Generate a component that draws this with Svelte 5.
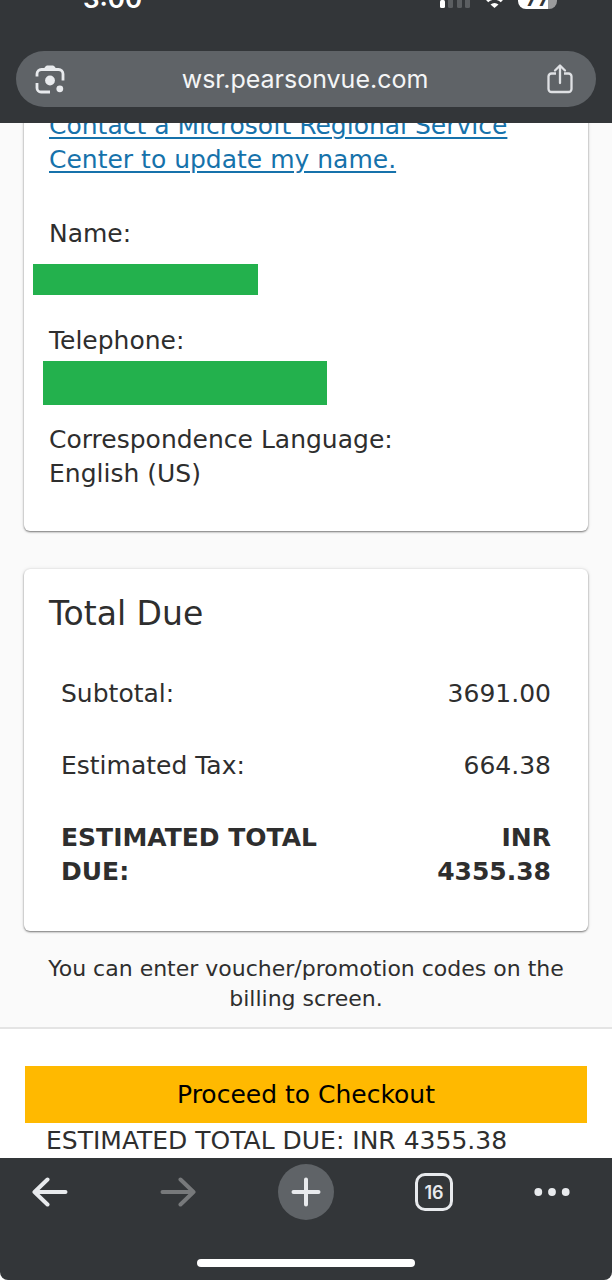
<script>
  const charges = [
    { label: 'Subtotal:', amount: '3691.00' },
    { label: 'Estimated Tax:', amount: '664.38' }
  ];
  const total = { label: 'ESTIMATED TOTAL DUE:', amount: 'INR 4355.38' };
  const openTabs = 16;
</script>

<div class="screen">
  <header>
    <div class="status">
      <span class="time">3:00</span>
      <div class="indicators">
        <svg width="32" height="24" viewBox="0 0 32 24" aria-hidden="true">
          <rect x="0" y="16" width="5" height="8" rx="1.5" fill="#fff" />
          <rect x="8" y="11" width="5" height="13" rx="1.5" fill="#5b5e61" />
          <rect x="17" y="6" width="5" height="18" rx="1.5" fill="#5b5e61" />
          <rect x="25" y="1" width="5" height="23" rx="1.5" fill="#5b5e61" />
        </svg>
        <svg width="30" height="24" viewBox="0 0 30 24" aria-hidden="true">
          <path d="M2 10.500a18.500 18.500 0 0 1 26 0M7 17a11 11 0 0 1 15 0" fill="none" stroke="#fff" stroke-width="3.500" />
          <path d="M10.500 20.500a6 6 0 0 1 8 0L14.500 24Z" fill="#fff" />
        </svg>
        <span class="battery">77</span>
      </div>
    </div>
    <div class="address">
      <button aria-label="Search with camera">
        <svg width="32" height="32" viewBox="0 0 32 32" aria-hidden="true">
          <path d="M3 13.500V11a4.500 4.500 0 0 1 4.500-4.500h17A4.500 4.500 0 0 1 29 11v6.500M3 20v5a4 4 0 0 0 4 4h9" fill="none" stroke="#e8eaed" stroke-width="2.800" />
          <path d="M9.500 6.500 11 4Q12 2.500 13 2.500h6q1 0 2 1.500L22.500 6.500Z" fill="#e8eaed" />
          <circle cx="16" cy="17.500" r="4.900" fill="#e8eaed" />
          <circle cx="25.800" cy="25.800" r="3.400" fill="#e8eaed" />
        </svg>
      </button>
      <span class="url">wsr.pearsonvue.com</span>
      <button aria-label="Share">
        <svg width="32" height="32" viewBox="0 0 32 32" aria-hidden="true">
          <path d="M12 10.500H7.500a3 3 0 0 0-3 3V26a3 3 0 0 0 3 3h17a3 3 0 0 0 3-3V13.500a3 3 0 0 0-3-3H20" fill="none" stroke="#dfe1e4" stroke-width="2.300" />
          <path d="M16 20V3M11 7.500 16 2.500l5 5" fill="none" stroke="#dfe1e4" stroke-width="2.300" stroke-linecap="round" stroke-linejoin="round" />
        </svg>
      </button>
    </div>
  </header>

  <main>
    <section class="card profile">
      <a href="#contact">Contact a Microsoft Regional Service Center to update my name.</a>
      <dl>
        <div class="name">
          <dt>Name:</dt>
          <dd aria-label="Name hidden"></dd>
        </div>
        <div class="telephone">
          <dt>Telephone:</dt>
          <dd aria-label="Telephone hidden"></dd>
        </div>
        <div class="language">
          <dt>Correspondence Language:</dt>
          <dd>English (US)</dd>
        </div>
      </dl>
    </section>

    <section class="card due">
      <h2>Total Due</h2>
      <table>
        <tbody>
          {#each charges as charge}
            <tr><th scope="row">{charge.label}</th><td>{charge.amount}</td></tr>
          {/each}
          <tr class="total"><th scope="row">{total.label}</th><td>{total.amount}</td></tr>
        </tbody>
      </table>
    </section>

    <p class="note">You can enter voucher/promotion codes on the billing screen.</p>
  </main>

  <div class="checkout">
    <button>Proceed to Checkout</button>
    <p>{total.label} {total.amount}</p>
  </div>

  <footer>
    <nav>
      <button aria-label="Back">
        <svg width="36" height="32" viewBox="0 0 36 32" aria-hidden="true">
          <path d="M33.500 16H2.500M15.500 3.500 2.500 16l13 12.500" fill="none" stroke="#e8eaed" stroke-width="4" stroke-linecap="round" stroke-linejoin="round" />
        </svg>
      </button>
      <button aria-label="Forward" disabled>
        <svg width="36" height="32" viewBox="0 0 36 32" aria-hidden="true">
          <path d="M2.500 16h31M20.500 3.500l13 12.500-13 12.500" fill="none" stroke="#77797b" stroke-width="4" stroke-linecap="round" stroke-linejoin="round" />
        </svg>
      </button>
      <button class="new" aria-label="New tab">
        <svg width="32" height="32" viewBox="0 0 32 32" aria-hidden="true">
          <path d="M16 3.500v25M3.500 16h25" fill="none" stroke="#e8eaed" stroke-width="4" stroke-linecap="round" />
        </svg>
      </button>
      <button aria-label="{openTabs} open tabs"><span class="tabs">{openTabs}</span></button>
      <button class="more" aria-label="More">
        <svg width="36" height="32" viewBox="0 0 36 32" aria-hidden="true" fill="#e8eaed">
          <circle cx="4.300" cy="16" r="3.900" />
          <circle cx="18" cy="16" r="3.900" />
          <circle cx="31.700" cy="16" r="3.900" />
        </svg>
      </button>
    </nav>
    <div class="home"></div>
  </footer>
</div>

<style>
  :global(body) {
    background: #fff;
  }

  .screen {
    font: 25px/34px Verdana, "DejaVu Sans", sans-serif;
    color: #2e2e2e;
  }

  button {
    border: 0;
    padding: 0;
    font: inherit;
    background: none;
  }

  svg {
    display: block;
  }

  header {
    position: relative;
    z-index: 1;
    padding: 0 16px 16px;
    overflow: hidden;
    color: #fff;
    background: #333639;
    font-family: Inter, sans-serif;
  }

  /* Only the lower edge of the status row is on screen. */
  .status {
    display: flex;
    justify-content: space-between;
    height: 67px;
    margin-top: -16px;
    padding: 0 39px 0 67px;
  }

  .time {
    font-size: 26px;
    line-height: 30px;
    font-weight: 600;
  }

  .indicators {
    display: flex;
    gap: 8px;
    align-items: flex-start;
  }

  .battery {
    width: 39px;
    height: 25px;
    border-radius: 8px;
    color: #333639;
    background: linear-gradient(90deg, #fff 77%, #9a9b9c 77%);
    font-size: 20px;
    line-height: 30px;
    font-weight: 700;
    text-align: center;
  }

  .address {
    display: flex;
    align-items: center;
    justify-content: space-between;
    height: 56px;
    padding: 0 20px 0 18px;
    border-radius: 28px;
    background: #5f6367;
  }

  .url {
    font-size: 25px;
    color: #f4f5f6;
  }

  main {
    padding: 0 24px 13px;
    overflow: hidden;
    background: #fafafa;
  }

  .card {
    padding: 25px 25px 24px;
    border-radius: 6px;
    background: #fff;
    box-shadow: 0 1px 2px rgba(0, 0, 0, 0.5), 0 0 4px rgba(0, 0, 0, 0.1);
  }

  /* The page is scrolled, so the first line runs under the address bar. */
  .profile {
    margin-top: -39px;
    padding-bottom: 40px;
  }

  a {
    display: block;
    color: #1672ab;
    text-decoration-thickness: 2px;
    text-underline-offset: 3px;
  }

  dl,
  dd,
  h2,
  p {
    margin: 0;
  }

  dl {
    padding-top: 40px;
  }

  .name dd {
    width: 225px;
    height: 31px;
    margin: 13px 0 29px -16px;
    background: #23b14d;
  }

  .telephone dd {
    width: 284px;
    height: 44px;
    margin: 3px 0 18px -6px;
    background: #23b14d;
  }

  .due {
    margin-top: 38px;
  }

  h2 {
    margin-bottom: 24px;
    font-size: 33px;
    line-height: 40px;
    font-weight: 400;
  }

  table {
    width: 100%;
    border-collapse: collapse;
    table-layout: fixed;
  }

  th,
  td {
    padding: 19px 12px;
    font-weight: 400;
    text-align: left;
    vertical-align: top;
  }

  th {
    width: 60%;
  }

  td {
    text-align: right;
  }

  tr:last-child > * {
    padding-bottom: 18px;
  }

  .total th,
  .total td {
    font-weight: 700;
  }

  .note {
    margin-top: 23px;
    font-size: 22px;
    line-height: 30px;
    text-align: center;
  }

  .checkout {
    padding: 37px 25px 0;
    border-top: 2px solid #e4e4e4;
    background: #fff;
  }

  .checkout button {
    display: block;
    width: 100%;
    height: 57px;
    color: #000;
    background: #ffb900;
  }

  .checkout p {
    padding: 1px 21px 0;
  }

  footer {
    padding: 6px 22px 13px;
    border-radius: 0 0 8px 8px;
    background: #333639;
  }

  nav {
    display: flex;
    justify-content: space-between;
  }

  nav button {
    display: flex;
    align-items: center;
    justify-content: center;
    width: 56px;
    height: 56px;
  }

  .new {
    border-radius: 50%;
    background: #5f6367;
  }

  .more {
    justify-content: flex-start;
  }

  .tabs {
    box-sizing: border-box;
    width: 38px;
    height: 38px;
    border: 3px solid #e8eaed;
    border-radius: 10px;
    color: #e8eaed;
    font: 600 18px/34px Inter, sans-serif;
    text-align: center;
  }

  .home {
    width: 218px;
    height: 8px;
    margin: 39px auto 0;
    border-radius: 4px;
    background: #fff;
  }
</style>
